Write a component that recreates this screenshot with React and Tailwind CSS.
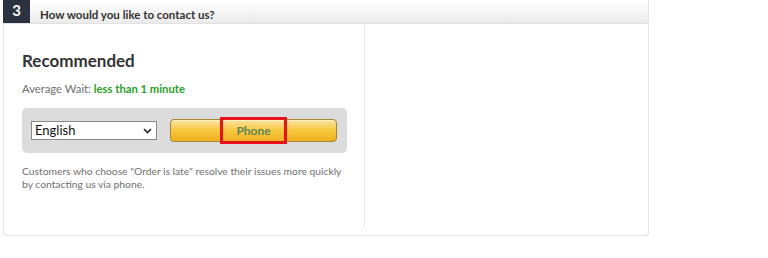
export default function App() {
  return (
    <div className="w-[768px] h-[258px] bg-white overflow-hidden" style={{ fontFamily: 'Lato, "Noto Sans", sans-serif' }}>
      <div className="ml-[3px] w-[646px]">
        <div className="h-[24px] flex bg-gradient-to-b from-white to-[#ebebeb] rounded-br-[3px] border-r border-b border-[#e2e2e2]">
          <div className="w-[27px] h-[23px] bg-[#2c3340] flex items-center justify-center text-white font-bold text-[15px] leading-none pb-[2px]">3</div>
          <div className="pl-[10px] flex items-end text-[11.5px] font-bold text-[#333] leading-[16px]">How would you like to contact us?</div>
        </div>
        <div className="h-[212px] border border-t-0 border-[#e3e3e3] rounded-b-[4px] flex">
          <div className="w-[361px] h-[203px] border-r border-[#e6e6e6] pl-[18px] pt-[26px]">
            <div className="text-[17px] font-bold text-[#333] leading-[22px]">Recommended</div>
            <div className="mt-[10px] text-[11.25px] leading-[14px] text-[#707070]">
              Average Wait: <span className="font-bold text-[#2aa02a]">less than 1 minute</span>
            </div>
            <div className="mt-[12px] w-[325px] h-[45px] rounded-[5px] bg-[#dcdcdc] flex items-center pl-[9px] gap-[13px]">
              <div className="w-[126px] h-[19px] bg-white border border-[#8a8a8a] flex items-center justify-between pl-[3px] pr-[4px] text-[13px] text-[#111]">
                <span>English</span>
                <svg width="9" height="6" viewBox="0 0 9 6"><path d="M1 1l3.5 3.5L8 1" fill="none" stroke="#222" strokeWidth="1.6" /></svg>
              </div>
              <div className="relative w-[167px] h-[23px] rounded-[4px] border border-[#a88734] bg-gradient-to-b from-[#fde49a] via-[#f8c83c] to-[#f0b022] flex items-center justify-center text-[12px] font-bold text-[#5f865a] shadow-[inset_0_1px_0_#fff3c6]">
                Phone
                <div className="absolute left-[49px] top-[-3px] w-[67px] h-[27px] border-[3px] border-[#e8121d]"></div>
              </div>
            </div>
            <div className="mt-[12px] text-[10.3px] leading-[13px] text-[#707070] w-[322px]">
              Customers who choose "Order is late" resolve their issues more quickly by contacting us via phone.
            </div>
          </div>
        </div>
      </div>
    </div>
  );
}
